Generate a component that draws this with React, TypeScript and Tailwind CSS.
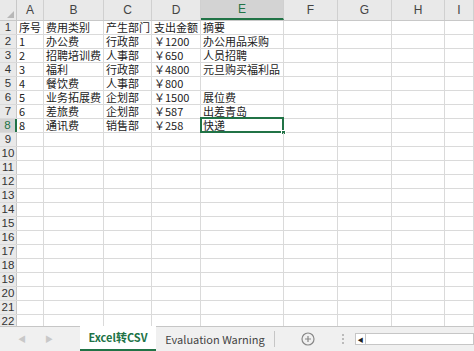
import React from 'react';

const COLS = ['A', 'B', 'C', 'D', 'E', 'F', 'G', 'H', 'I'];

// fixed column widths, measured off the sheet
const colW = [
  'w-[27px]',
  'w-[60px]',
  'w-[48px]',
  'w-[49px]',
  'w-[83px]',
  'w-[54px]',
  'w-[54px]',
  'w-[53px]',
  'flex-1',
];

const data: string[][] = [
  ['序号', '费用类别', '产生部门', '支出金额', '摘要'],
  ['1', '办公费', '行政部', '￥1200', '办公用品采购'],
  ['2', '招聘培训费', '人事部', '￥650', '人员招聘'],
  ['3', '福利', '行政部', '￥4800', '元旦购买福利品'],
  ['4', '餐饮费', '人事部', '￥800', ''],
  ['5', '业务拓展费', '企划部', '￥1500', '展位费'],
  ['6', '差旅费', '企划部', '￥587', '出差青岛'],
  ['8', '通讯费', '销售部', '￥258', '快递'],
];

const font = { fontFamily: '"Noto Sans CJK SC", "Liberation Sans", sans-serif' };
const latin = { fontFamily: '"Liberation Sans", Arial, sans-serif' };

export default function App() {
  const rows = Array.from({ length: 22 }, (_, i) => i + 1);

  return (
    <div className="w-[474px] h-[351px] bg-white flex flex-col overflow-hidden text-[#222]" style={font}>
      {/* Grid */}
      <div className="h-[326px] overflow-hidden flex flex-col">
        {/* Column header */}
        <div className="flex h-[21px] shrink-0 bg-[#e9e9e9] border-b border-[#c8c8c8]" style={latin}>
          <div className="w-[17px] shrink-0 border-r border-[#c8c8c8] relative">
            <div className="absolute right-[2px] bottom-[2px] w-0 h-0 border-l-[7px] border-l-transparent border-b-[7px] border-b-[#b7b7b7]" />
          </div>
          {COLS.map((c, i) => (
            <div
              key={c}
              className={`${colW[i]} shrink-0 flex items-center justify-center text-[12px] text-[#444] border-r border-[#d0d0d0] ${
                c === 'E' ? 'bg-[#d3d3d3] border-b-2 border-b-[#217346] text-[#217346]' : ''
              }`}
            >
              {c}
            </div>
          ))}
        </div>

        {rows.map((r) => {
          const cells = data[r - 1] || [];
          return (
            <div key={r} className="flex h-[14px] shrink-0 border-b border-[#dadada]">
              <div
                style={latin}
                className={`w-[17px] shrink-0 flex items-center justify-center text-[11.5px] leading-[13px] text-[#333] border-r ${
                  r === 8 ? 'bg-[#d3d3d3] border-r-2 border-r-[#217346] text-[#217346]' : 'bg-[#e9e9e9] border-[#c8c8c8]'
                }`}
              >
                {r}
              </div>
              {COLS.map((c, i) => (
                <div
                  key={c}
                  className={`${colW[i]} shrink-0 relative flex items-center pl-[2px] text-[11px] leading-[13px] whitespace-nowrap border-r border-[#dadada]`}
                >
                  {cells[i] || ''}
                  {r === 8 && c === 'E' && (
                    <>
                      <div className="absolute -left-[1px] -top-[2px] -right-[1px] -bottom-[1px] border-2 border-[#217346]" />
                      <div className="absolute -right-[3px] -bottom-[3px] w-[5px] h-[5px] bg-[#217346] border border-white" />
                    </>
                  )}
                </div>
              ))}
            </div>
          );
        })}
      </div>

      {/* Sheet tabs */}
      <div className="h-[25px] shrink-0 bg-[#f0f0f0] border-t border-[#c6c6c6] flex items-stretch text-[11px]">
        <div className="w-[80px] shrink-0 flex items-center pl-[18px] gap-[19px] text-[#c8c8c8] text-[8px]">
          <span>◀</span>
          <span>▶</span>
        </div>
        <div className="w-[76px] shrink-0 bg-white -mt-px border-b-2 border-[#217346] flex items-center justify-center font-bold text-[#217346]">
          Excel转CSV
        </div>
        <div className="w-[118px] shrink-0 flex items-center justify-center text-[#444]">Evaluation Warning</div>
        <div className="w-px my-[4px] bg-[#c6c6c6]" />
        <div className="w-[66px] shrink-0 flex items-center justify-center">
          <svg width="14" height="14" viewBox="0 0 14 14" fill="none" stroke="#888" strokeWidth="1.2">
            <circle cx="7" cy="7" r="6" />
            <path d="M7 4v6M4 7h6" />
          </svg>
        </div>
        <div className="w-[4px] shrink-0 flex flex-col items-center justify-center gap-[2px]">
          <span className="w-[2px] h-[2px] bg-[#bbb]" />
          <span className="w-[2px] h-[2px] bg-[#bbb]" />
          <span className="w-[2px] h-[2px] bg-[#bbb]" />
        </div>
        <div className="flex-1 flex items-center pl-[10px]">
          <div className="flex-1 h-[12px] bg-white border border-[#c6c6c6] flex">
            <div className="w-[10px] border-r border-[#c6c6c6] flex items-center justify-center text-[6px] text-[#222]">◀</div>
          </div>
        </div>
      </div>
    </div>
  );
}
